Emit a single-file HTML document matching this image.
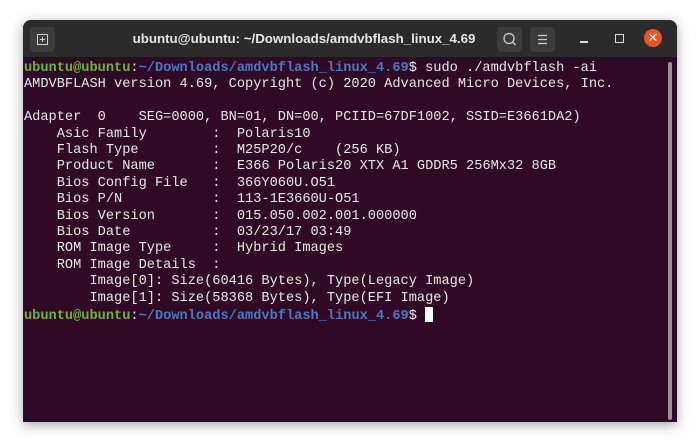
<!DOCTYPE html>
<html><head><style>
body{margin:0;width:700px;height:448px;background:#fff;overflow:hidden;position:relative;font-family:"Liberation Sans",sans-serif}
.win{position:absolute;left:23px;top:20px;width:654px;height:402px;background:#300a24;border-radius:8px 8px 0 0;box-shadow:0 3px 12px rgba(0,0,0,.35);overflow:hidden}
.tb{height:37px;background:#2b2b2b;position:relative;color:#e6e6e6}
.title{position:absolute;left:107px;width:348px;top:11px;text-align:center;font-weight:bold;font-size:13.3px;white-space:nowrap}
.btn{position:absolute;top:7px;width:25px;height:25px;background:#3c3c3c;border-radius:4px}
pre{margin:0;position:absolute;left:1px;top:41px;font-family:"Liberation Mono",monospace;font-size:13.65px;line-height:16.4px;color:#e8e8e8}
.g{color:#6bb52e;font-weight:bold}.b{color:#4a78c2;font-weight:bold}
.cur{display:inline-block;width:8px;height:15px;background:#fff;vertical-align:-3px}
.sb{position:absolute;right:5px;top:42px;width:4px;height:358px;background:#9a8f98;border-radius:2px}
</style></head><body>
<div class="win">
<div class="tb">
<div class="btn" style="left:7px"><svg width="25" height="25"><rect x="7.5" y="7.5" width="10" height="10" fill="none" stroke="#ccc" stroke-width="1"/><path d="M12.5 10v5M10 12.5h5" stroke="#ccc"/></svg></div>
<div class="title">ubuntu@ubuntu: ~/Downloads/amdvbflash_linux_4.69</div>
<div class="btn" style="left:474px"><svg width="25" height="25"><circle cx="12" cy="11.5" r="5" fill="none" stroke="#ccc" stroke-width="1.3"/><path d="M15.5 15l3 3" stroke="#ccc" stroke-width="1.3"/></svg></div>
<div class="btn" style="left:507px"><svg width="25" height="25"><path d="M8 8.5h9M8 12.5h9M8 16.5h9" stroke="#ccc" stroke-width="1.2"/></svg></div>
<div style="position:absolute;left:557px;top:21px;width:8px;height:1.5px;background:#ddd"></div>
<div style="position:absolute;left:592px;top:14px;width:7px;height:7px;border:1.3px solid #ddd"></div>
<div style="position:absolute;left:621px;top:9px;width:18px;height:18px;border-radius:50%;background:#e95420;color:#fff;font-size:13px;text-align:center;line-height:18px">✕</div>
</div>
<div class="sb"></div>
<pre><span class="g">ubuntu@ubuntu</span>:<span class="b">~/Downloads/amdvbflash_linux_4.69</span>$ sudo ./amdvbflash -ai
AMDVBFLASH version 4.69, Copyright (c) 2020 Advanced Micro Devices, Inc.

Adapter  0    SEG=0000, BN=01, DN=00, PCIID=67DF1002, SSID=E3661DA2)
    Asic Family        :  Polaris10
    Flash Type         :  M25P20/c    (256 KB)
    Product Name       :  E366 Polaris20 XTX A1 GDDR5 256Mx32 8GB
    Bios Config File   :  366Y060U.O51
    Bios P/N           :  113-1E3660U-O51
    Bios Version       :  015.050.002.001.000000
    Bios Date          :  03/23/17 03:49
    ROM Image Type     :  Hybrid Images
    ROM Image Details  :
        Image[0]: Size(60416 Bytes), Type(Legacy Image)
        Image[1]: Size(58368 Bytes), Type(EFI Image)
<span class="g">ubuntu@ubuntu</span>:<span class="b">~/Downloads/amdvbflash_linux_4.69</span>$ <span class="cur"></span></pre>
</div>
</body></html>
